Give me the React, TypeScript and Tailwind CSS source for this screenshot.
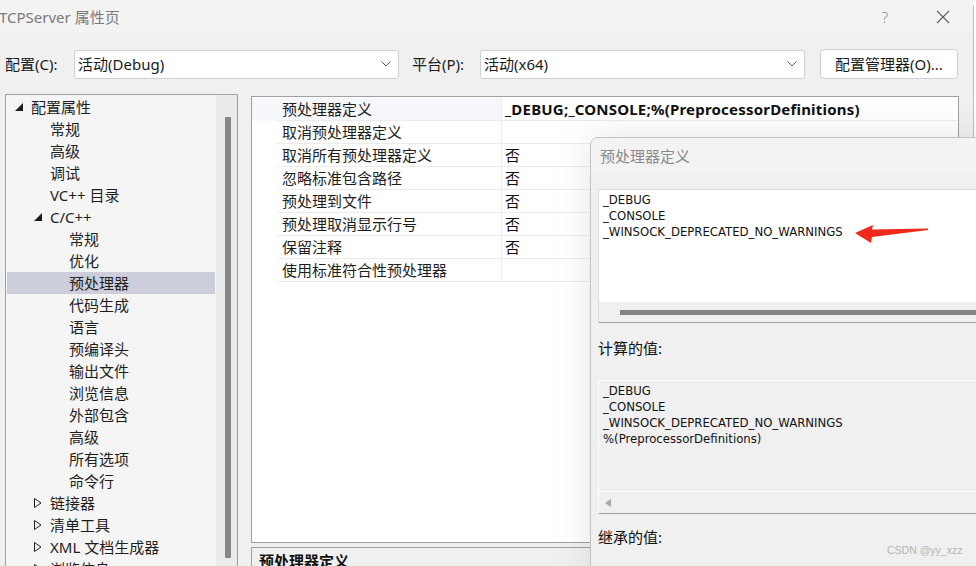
import React from "react";

const ui = "font-['Noto_Sans','Noto_Sans_CJK_SC',sans-serif]";
const mono = "font-['DejaVu_Sans',sans-serif]";

type TreeItem = { text: string; level: 0 | 1 | 2; arrow?: "open" | "closed"; selected?: boolean };

const treeItems: TreeItem[] = [
  { text: "配置属性", level: 0, arrow: "open" },
  { text: "常规", level: 1 },
  { text: "高级", level: 1 },
  { text: "调试", level: 1 },
  { text: "VC++ 目录", level: 1 },
  { text: "C/C++", level: 1, arrow: "open" },
  { text: "常规", level: 2 },
  { text: "优化", level: 2 },
  { text: "预处理器", level: 2, selected: true },
  { text: "代码生成", level: 2 },
  { text: "语言", level: 2 },
  { text: "预编译头", level: 2 },
  { text: "输出文件", level: 2 },
  { text: "浏览信息", level: 2 },
  { text: "外部包含", level: 2 },
  { text: "高级", level: 2 },
  { text: "所有选项", level: 2 },
  { text: "命令行", level: 2 },
  { text: "链接器", level: 1, arrow: "closed" },
  { text: "清单工具", level: 1, arrow: "closed" },
  { text: "XML 文档生成器", level: 1, arrow: "closed" },
  { text: "浏览信息", level: 1, arrow: "closed" },
];

const levelPad = ["pl-[9px]", "pl-[28px]", "pl-[47px]"];

const gridRows = [
  { label: "预处理器定义", value: "_DEBUG;_CONSOLE;%(PreprocessorDefinitions)", bold: true },
  { label: "取消预处理器定义", value: "" },
  { label: "取消所有预处理器定义", value: "否" },
  { label: "忽略标准包含路径", value: "否" },
  { label: "预处理到文件", value: "否" },
  { label: "预处理取消显示行号", value: "否" },
  { label: "保留注释", value: "否" },
  { label: "使用标准符合性预处理器", value: "" },
];

function Chevron() {
  return (
    <svg width="10" height="6" viewBox="0 0 10 6" className="shrink-0">
      <path d="M0.5 0.5 L5 5 L9.5 0.5" fill="none" stroke="#606060" strokeWidth="1" />
    </svg>
  );
}

function ComboBox({ text, width }: { text: string; width: string }) {
  return (
    <div
      className={`${width} h-[29px] flex items-center justify-between bg-white border border-[#d0d0d0] rounded-[3px] pl-[3px] pr-[7px] text-[15px] text-[#1a1a1a]`}
    >
      <span className="leading-[22px]">{text}</span>
      <Chevron />
    </div>
  );
}

function TreeArrow({ kind }: { kind?: "open" | "closed" }) {
  if (kind === "open") {
    return (
      <svg width="8" height="8" viewBox="0 0 8 8">
        <polygon points="8,0 8,8 0,8" fill="#1e1e1e" />
      </svg>
    );
  }
  if (kind === "closed") {
    return (
      <svg width="8" height="10" viewBox="0 0 8 10">
        <polygon points="0.5,0.5 7,5 0.5,9.5" fill="none" stroke="#1e1e1e" strokeWidth="1" />
      </svg>
    );
  }
  return null;
}

function Tree() {
  return (
    <div className="ml-[5px] w-[233px] h-[480px] shrink-0 border border-[#a0a0a0] flex bg-[#f5f5f5]">
      <div className="w-[210px] pt-[1px]">
        {treeItems.map((item, i) => (
          <div
            key={i}
            className={`h-[22px] flex items-center ${levelPad[item.level]} ${
              item.selected ? "bg-[#cccedb] ml-[1px] mr-[1px] !pl-[46px]" : ""
            }`}
          >
            <div className="w-[16px] h-[22px] flex items-center">
              <TreeArrow kind={item.arrow} />
            </div>
            <span className="text-[15px] leading-[22px] text-[#1e1e1e] whitespace-nowrap">{item.text}</span>
          </div>
        ))}
      </div>
      <div className="w-[21px] bg-[#ebebeb] flex justify-center pt-[22px]">
        <div className="w-[6px] h-[441px] bg-[#868686] rounded-[1px] ml-[3px]" />
      </div>
    </div>
  );
}

function PropertyGrid() {
  return (
    <div className="ml-[13px] mt-[2px] flex flex-col w-[708px] shrink-0">
      <div className="h-[447px] shrink-0 border border-[#a0a0a0] bg-white pt-[1px]">
        {gridRows.map((row, i) => (
          <div key={i} className="flex h-[23px]">
            <div className={`w-[25px] ${i === 0 ? "bg-[#f6f8fc]" : "bg-white"}`} />
            <div
              className={`w-[225px] flex items-center pl-[5px] border-b border-r border-[#ececec] ${
                i === 0 ? "bg-[#f5f7fc]" : "bg-white"
              }`}
            >
              <span className="text-[15px] leading-[22px] text-[#1e1e1e] whitespace-nowrap">{row.label}</span>
            </div>
            <div className="flex-1 flex items-center pl-[3px] border-b border-[#ececec]">
              <span
                className={`text-[15px] leading-[22px] text-[#111] whitespace-nowrap ${row.bold ? "font-bold tracking-[0.2px]" : ""}`}
              >
                {row.value}
              </span>
            </div>
          </div>
        ))}
      </div>
      <div className="mt-[4px] h-[40px] shrink-0 border-l border-t border-r border-[#a0a0a0] bg-[#f0f0f0] pl-[7px] pt-[1px]">
        <span className="text-[15px] leading-[22px] font-bold text-[#111]">预处理器定义</span>
      </div>
    </div>
  );
}

function Popup() {
  return (
    <div className="absolute left-[590px] top-[137px] w-[400px] h-[440px] rounded-tl-[8px] border border-[#c4c4c4] bg-[#f0f0f0] shadow-[0_0_40px_rgba(0,0,0,0.10)] overflow-hidden flex flex-col">
      <div className="h-[36px] shrink-0 bg-[#f3f3f3] flex items-center pl-[9px]">
        <span className="text-[15px] leading-[22px] text-[#8a8a8a]">预处理器定义</span>
      </div>
      <div className="ml-[7px] mt-[15px] h-[134px] shrink-0 flex flex-col border-l border-t border-b border-[#dcdcdc] border-b-[#a0a0a0]">
        <div className={`flex-1 bg-white pl-[4px] pt-[2px] ${mono} text-[11.7px] leading-[16px] text-[#111]`}>
          <div>_DEBUG</div>
          <div>_CONSOLE</div>
          <div>_WINSOCK_DEPRECATED_NO_WARNINGS</div>
        </div>
        <div className="h-[20px] shrink-0 bg-[#f0f0f0] flex items-center pl-[21px]">
          <div className="w-full h-[5px] bg-[#858585]" />
        </div>
      </div>
      <div className="ml-[7px] mt-[14px] h-[22px] shrink-0 flex items-center">
        <span className="text-[15px] leading-[22px] text-[#111]">计算的值:</span>
      </div>
      <div className="ml-[7px] mt-[21px] h-[134px] shrink-0 flex flex-col border-l border-t border-white border-b border-b-[#a0a0a0]">
        <div className={`flex-1 pl-[4px] pt-[2px] ${mono} text-[11.7px] leading-[16px] text-[#111]`}>
          <div>_DEBUG</div>
          <div>_CONSOLE</div>
          <div>_WINSOCK_DEPRECATED_NO_WARNINGS</div>
          <div>%(PreprocessorDefinitions)</div>
        </div>
        <div className="h-[22px] shrink-0 border-t border-white flex items-center pl-[6px]">
          <svg width="6" height="8" viewBox="0 0 6 8">
            <polygon points="6,0 6,8 0,4" fill="#a8a8a8" />
          </svg>
        </div>
      </div>
      <div className="ml-[7px] mt-[12px] h-[22px] shrink-0 flex items-center">
        <span className="text-[15px] leading-[22px] text-[#111]">继承的值:</span>
      </div>
    </div>
  );
}

export default function App() {
  return (
    <div className={`relative w-[976px] h-[566px] overflow-hidden bg-white ${ui}`}>
      <div className="w-[974px] h-full bg-[#f0f0f0] border-r border-[#bdbdbd] rounded-tr-[8px] flex flex-col">
        <div className="h-[33px] shrink-0 bg-[#f3f3f3] flex items-center justify-between">
          <span className="text-[15px] leading-[22px] text-[#7a7a7a] -ml-[1px]">TCPServer 属性页</span>
          <div className="flex items-center mr-[23px]">
            <span className="text-[15px] leading-[22px] text-[#8a8a8a] font-light mr-[48px]">?</span>
            <svg width="14" height="14" viewBox="0 0 14 14">
              <path d="M1 1 L13 13 M13 1 L1 13" stroke="#606060" strokeWidth="1.1" />
            </svg>
          </div>
        </div>
        <div className="mt-[16px] shrink-0 flex items-center h-[30px]">
          <span className="ml-[5px] w-[69px] text-[15px] leading-[22px] text-[#1a1a1a]">配置(C):</span>
          <ComboBox text="活动(Debug)" width="w-[325px]" />
          <span className="ml-[13px] w-[68px] text-[15px] leading-[22px] text-[#1a1a1a]">平台(P):</span>
          <ComboBox text="活动(x64)" width="w-[325px]" />
          <button className="ml-[15px] w-[138px] h-[30px] bg-white border border-[#d0d0d0] rounded-[4px] text-[15px] leading-[22px] text-[#1a1a1a]">
            配置管理器(O)...
          </button>
        </div>
        <div className="mt-[15px] shrink-0 flex items-start">
          <Tree />
          <PropertyGrid />
        </div>
      </div>
      <Popup />
      <svg className="absolute left-[850px] top-[221px]" width="82" height="26" viewBox="0 0 82 26">
        <polygon points="5,12 23,4 22,8.5 78,7.5 78,9 22,16 21,22" fill="#f02a1a" />
      </svg>
      <span className="absolute left-[887px] top-[542px] text-[10.5px] leading-[16px] text-[#b4b4b4] font-['Liberation_Sans',sans-serif]">
        CSDN @yy_xzz
      </span>
    </div>
  );
}
